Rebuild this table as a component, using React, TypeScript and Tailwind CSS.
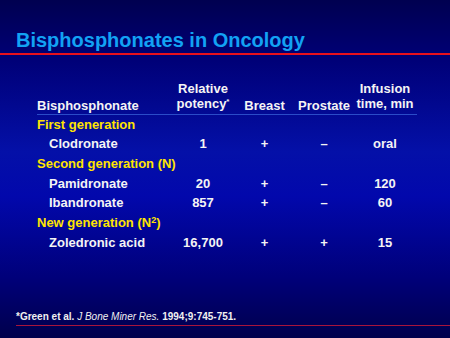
import React from 'react';

type Row =
  | { kind: 'group'; label: React.ReactNode }
  | { kind: 'drug'; name: string; potency: string; breast: string; prostate: string; time: string };

const rows: Row[] = [
  { kind: 'group', label: 'First generation' },
  { kind: 'drug', name: 'Clodronate', potency: '1', breast: '+', prostate: '–', time: 'oral' },
  { kind: 'group', label: 'Second generation (N)' },
  { kind: 'drug', name: 'Pamidronate', potency: '20', breast: '+', prostate: '–', time: '120' },
  { kind: 'drug', name: 'Ibandronate', potency: '857', breast: '+', prostate: '–', time: '60' },
  {
    kind: 'group',
    label: (
      <>
        New generation (N<span className="text-[9px] relative top-[-4px]">2</span>)
      </>
    ),
  },
  { kind: 'drug', name: 'Zoledronic acid', potency: '16,700', breast: '+', prostate: '+', time: '15' },
];

const cols = 'grid grid-cols-[138px_56px_67px_52px_67px]';

export default function App() {
  return (
    <div
      className="w-[450px] h-[338px] overflow-hidden flex flex-col bg-[linear-gradient(to_bottom,#000050_0%,#000078_18%,#0410a8_45%,#0208ac_58%,#00007a_82%,#00004c_100%)]"
      style={{ fontFamily: '"Liberation Sans", Arial, sans-serif' }}
    >
      <div className="pt-[29px] pl-[16px] h-[52px]">
        <h1 className="text-[20px] leading-[23px] font-bold text-[#12a2f4]">Bisphosphonates in Oncology</h1>
      </div>
      <div className="mt-[1px] h-[2px] bg-[#e8101c]" />

      <div className="ml-[37px] mt-[25.5px] w-[380px] text-[13px] font-bold text-[#f4f4f4]">
        <div className={`${cols} leading-[15px] pb-[1px] border-b border-[#2a4cc8]`}>
          <div className="self-end">Bisphosphonate</div>
          <div className="text-center whitespace-nowrap">
            Relative
            <br />
            potency<span className="text-[8px] relative top-[-4px]">*</span>
          </div>
          <div className="self-end text-center">Breast</div>
          <div className="self-end text-center whitespace-nowrap">Prostate</div>
          <div className="text-center whitespace-nowrap pl-[3px]">
            Infusion
            <br />
            time, min
          </div>
        </div>

        {rows.map((r, i) =>
          r.kind === 'group' ? (
            <div key={i} className="h-[19.7px] flex items-center text-[#ffe400] whitespace-nowrap">
              <span>{r.label}</span>
            </div>
          ) : (
            <div key={i} className={`${cols} h-[19.7px] items-center`}>
              <div className="pl-[12px] whitespace-nowrap">{r.name}</div>
              <div className="text-center">{r.potency}</div>
              <div className="text-center">{r.breast}</div>
              <div className="text-center">{r.prostate}</div>
              <div className="text-center pl-[3px]">{r.time}</div>
            </div>
          )
        )}
      </div>

      <div className="mt-auto mb-[12px] ml-[16px]">
        <p className="text-[10px] leading-[12px] font-bold text-[#f0f0f0] whitespace-nowrap">
          *Green et al. <span className="italic font-normal">J Bone Miner Res.</span> 1994;9:745-751.
        </p>
        <div className="mt-[2px] h-[1px] bg-[#a8143c]" />
      </div>
    </div>
  );
}
